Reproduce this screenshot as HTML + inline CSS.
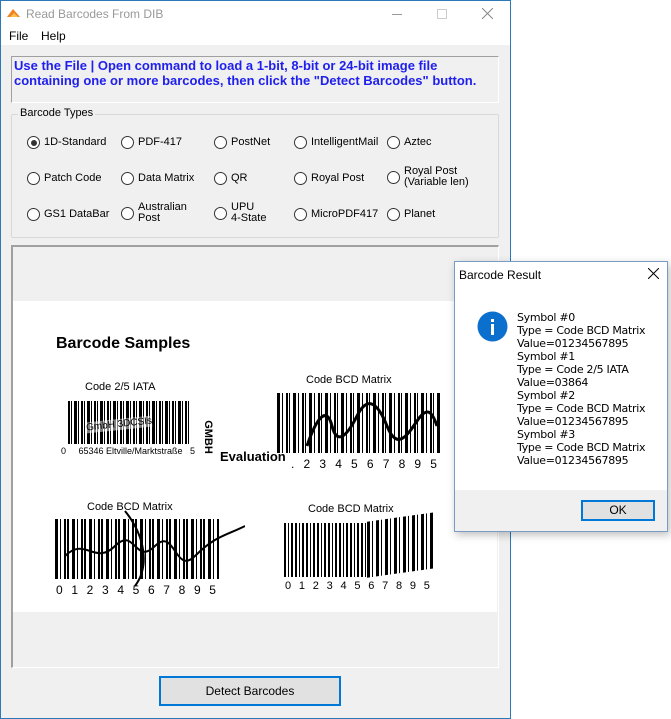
<!DOCTYPE html>
<html><head><meta charset="utf-8"><style>
*{margin:0;padding:0;box-sizing:border-box}
body{width:671px;height:719px;background:#fff;position:relative;overflow:hidden;font-family:"Liberation Sans","DejaVu Sans",sans-serif;font-size:12px;color:#000}
.a{position:absolute}
#win{left:0;top:0;width:511px;height:719px;border:1px solid #2b79b8;background:#f0f0f0}
.bc{position:absolute}
.r{position:absolute;display:flex;align-items:center;font-size:11px;line-height:11px}
.r i{display:inline-block;width:13px;height:13px;border:1px solid #333;border-radius:50%;background:#fff;margin-right:4px;flex:none;position:relative}
.r i.on::after{content:"";position:absolute;left:2.5px;top:2.5px;width:6px;height:6px;border-radius:50%;background:#333}
.num{position:absolute;font-size:11px;display:flex;justify-content:space-between;font-family:"Liberation Sans",sans-serif}
</style></head><body>
<div id="win" class="a">
 <div class="a" style="left:0;top:0;width:509px;height:44px;background:#fff"></div>
 <svg class="a" style="left:6px;top:7px" width="14" height="10"><path d="M0 9 L6 1 L13 9 Z" fill="#f08020"/><path d="M3 9 L7 5 L11 9Z" fill="#f7c050"/></svg>
 <div class="a" style="left:25px;top:6px;font-size:12px;color:#999">Read Barcodes From DIB</div>
 <div class="a" style="left:391px;top:13px;width:10px;height:1px;background:#999"></div>
 <div class="a" style="left:436px;top:8px;width:10px;height:10px;border:1px solid #ccc"></div>
 <svg class="a" style="left:481px;top:7px" width="11" height="11"><path d="M0 0L11 11M11 0L0 11" stroke="#888" stroke-width="1"/></svg>
 <div class="a" style="left:8px;top:28px;font-size:12px">File</div>
 <div class="a" style="left:40px;top:28px;font-size:12px">Help</div>
 <div class="a" style="left:10px;top:55px;width:488px;height:47px;border:1px solid #a0a0a0;border-right-color:#fff;border-bottom-color:#fff"></div>
 <div class="a" style="left:13px;top:57px;color:#2020ee;font-weight:bold;font-size:13px;line-height:15px;white-space:nowrap">Use the File | Open command to load a 1-bit, 8-bit or 24-bit image file<br>containing one or more barcodes, then click the "Detect Barcodes" button.</div>
 <div class="a" style="left:10px;top:113px;width:488px;height:124px;border:1px solid #d8d8d8;border-radius:2px"></div>
 <div class="a" style="left:17px;top:106px;background:#f0f0f0;padding:0 2px;font-size:11px">Barcode Types</div>
 <div class="r" style="left:26px;top:135px"><i class="on"></i>1D-Standard</div>
 <div class="r" style="left:120px;top:135px"><i></i>PDF-417</div>
 <div class="r" style="left:213px;top:135px"><i></i>PostNet</div>
 <div class="r" style="left:293px;top:135px"><i></i>IntelligentMail</div>
 <div class="r" style="left:386px;top:135px"><i></i>Aztec</div>
 <div class="r" style="left:26px;top:171px"><i></i>Patch Code</div>
 <div class="r" style="left:120px;top:171px"><i></i>Data Matrix</div>
 <div class="r" style="left:213px;top:171px"><i></i>QR</div>
 <div class="r" style="left:293px;top:171px"><i></i>Royal Post</div>
 <div class="r" style="left:386px;top:165px"><i></i>Royal Post<br>(Variable len)</div>
 <div class="r" style="left:26px;top:207px"><i></i>GS1 DataBar</div>
 <div class="r" style="left:120px;top:201px"><i></i>Australian<br>Post</div>
 <div class="r" style="left:213px;top:201px"><i></i>UPU<br>4-State</div>
 <div class="r" style="left:293px;top:207px"><i></i>MicroPDF417</div>
 <div class="r" style="left:386px;top:207px"><i></i>Planet</div>
 <div class="a" style="left:10px;top:244px;width:488px;height:423px;border:1px solid #a0a0a0;border-right-color:#fff;border-bottom-color:#fff;border-width:2px 1px 1px 2px"></div>
 <div class="a" style="left:12px;top:300px;width:484px;height:311px;background:#fff"></div>
 <div class="a" style="left:55px;top:334px;font-weight:bold;font-size:16px">Barcode Samples</div>
 <div class="a" style="left:84px;top:380px;font-size:11px">Code 2/5 IATA</div>
 <div class="bc" style="left:67px;top:400px;width:121px;height:43px;background:repeating-linear-gradient(90deg,#000 0 2px,#fff 2px 3px,#000 3px 4px,#fff 4px 6px,#000 6px 9px,#fff 9px 10px,#000 10px 11px,#fff 11px 13px)"></div>
 <div class="a" style="left:85px;top:418px;font-size:10px;background:rgba(255,255,255,.5);transform:rotate(-6deg)">GmbH 3DCSIs</div>
 <div class="a" style="left:60px;top:445px;font-size:9px">0 &nbsp; &nbsp; 65346 Eltville/Marktstraße &nbsp; 5</div>
 <div class="a" style="left:190px;top:430px;font-size:11px;font-weight:bold;transform:rotate(90deg)">GMBH</div>
 <div class="a" style="left:219px;top:448px;font-weight:bold;font-size:13px">Evaluation</div>
 <div class="a" style="left:305px;top:373px;font-size:11px">Code BCD Matrix</div>
 <div class="bc" style="left:276px;top:392px;width:164px;height:60px;background:repeating-linear-gradient(90deg,#000 0 3px,#fff 3px 5px,#000 5px 6px,#fff 6px 9px,#000 9px 11px,#fff 11px 12px,#000 12px 13px,#fff 13px 16px)"></div>
 <svg class="a" style="left:296px;top:395px" width="145" height="60"><path d="M10 50C20 20 30 10 35 30S50 40 60 20 80 5 90 30 110 40 120 25 135 15 140 30" stroke="#000" stroke-width="3" fill="none"/></svg>
 <div class="num" style="left:290px;top:456px;width:146px;font-size:12px"><span>.</span><span>2</span><span>3</span><span>4</span><span>5</span><span>6</span><span>7</span><span>8</span><span>9</span><span>5</span></div>
 <div class="a" style="left:86px;top:500px;font-size:11px">Code BCD Matrix</div>
 <div class="bc" style="left:54px;top:518px;width:164px;height:60px;background:repeating-linear-gradient(90deg,#000 0 3px,#fff 3px 5px,#000 5px 6px,#fff 6px 9px,#000 9px 11px,#fff 11px 12px,#000 12px 14px,#fff 14px 17px)"></div>
 <svg class="a" style="left:54px;top:505px" width="190" height="85"><path d="M10 50C30 30 40 60 60 40S80 60 100 40 120 70 140 50 170 30 190 20M70 5C90 30 95 60 80 80" stroke="#000" stroke-width="2" fill="none"/></svg>
 <div class="num" style="left:55px;top:582px;width:160px;font-size:12px"><span>0</span><span>1</span><span>2</span><span>3</span><span>4</span><span>5</span><span>6</span><span>7</span><span>8</span><span>9</span><span>5</span></div>
 <div class="a" style="left:307px;top:502px;font-size:11px">Code BCD Matrix</div>
 <div class="bc" style="left:283px;top:522px;width:82px;height:54px;background:repeating-linear-gradient(90deg,#000 0 2px,#fff 2px 4px,#000 4px 5px,#fff 5px 7px,#000 7px 9px,#fff 9px 11px)"></div>
 <div class="bc" style="left:366px;top:516px;width:68px;height:56px;transform:skewY(-8deg);background:repeating-linear-gradient(90deg,#000 0 3px,#fff 3px 5px,#000 5px 6px,#fff 6px 9px)"></div>
 <div class="num" style="left:284px;top:579px;width:145px;font-size:11px"><span>0</span><span>1</span><span>2</span><span>3</span><span>4</span><span>5</span><span>6</span><span>7</span><span>8</span><span>9</span><span>5</span></div>
 <div class="a" style="left:158px;top:675px;width:182px;height:30px;border:2px solid #0078d7;background:#e1e1e1;text-align:center;line-height:26px">Detect Barcodes</div>
</div>
<div class="a" style="left:454px;top:261px;width:214px;height:271px;border:1px solid #7a9cc4;background:#fff;box-shadow:2px 3px 8px rgba(0,0,0,.25)">
 <div class="a" style="left:4px;top:6px;font-size:12px">Barcode Result</div>
 <svg class="a" style="left:193px;top:6px" width="11" height="11"><path d="M0 0L11 11M11 0L0 11" stroke="#000" stroke-width="1"/></svg>
 <svg class="a" style="left:22px;top:49px" width="31" height="31"><circle cx="15.5" cy="15.5" r="15" fill="#0b6fce"/><rect x="14" y="13" width="3" height="11" fill="#fff"/><rect x="14" y="8" width="3" height="3" fill="#fff"/></svg>
 <div class="a" style="left:62px;top:49px;font-size:11px;line-height:13px;font-family:'DejaVu Sans',sans-serif;letter-spacing:-.3px">Symbol #0<br>Type = Code BCD Matrix<br>Value=01234567895<br>Symbol #1<br>Type = Code 2/5 IATA<br>Value=03864<br>Symbol #2<br>Type = Code BCD Matrix<br>Value=01234567895<br>Symbol #3<br>Type = Code BCD Matrix<br>Value=01234567895</div>
 <div class="a" style="left:0;top:228px;width:212px;height:41px;background:#f0f0f0"></div>
 <div class="a" style="left:126px;top:238px;width:74px;height:21px;border:2px solid #0078d7;background:#e1e1e1;text-align:center;line-height:17px">OK</div>
</div>
</body></html>
